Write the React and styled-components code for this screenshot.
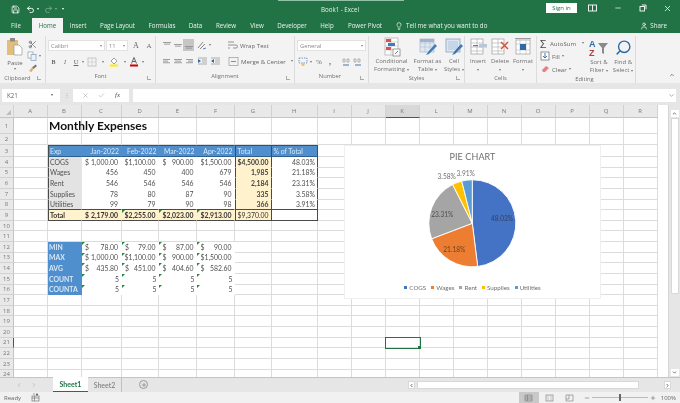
import React from 'react';
import styled, { createGlobalStyle } from 'styled-components';
import { Save, Undo2, Redo2, Lightbulb, Search, Scissors, Check, X, ChevronDown, ChevronUp, Minus, Plus, User, ChevronLeft, ChevronRight } from 'lucide-react';

const GREEN = '#217346';
const UI = '"Open Sans", "Liberation Sans", sans-serif';
const SHEET = 'Lato, "Liberation Sans", sans-serif';

const GlobalStyle = createGlobalStyle`
  html, body { margin: 0; padding: 0; background: #fff; overflow: hidden; }
  * { box-sizing: border-box; }
`;

const Window = styled.div`
  width: 680px;
  height: 403px;
  display: flex;
  flex-direction: column;
  overflow: hidden;
  font-family: ${UI};
  filter: blur(0.4px);
`;

/* title bar */
const TitleBar = styled.div`
  height: 18px;
  background: ${GREEN};
  display: grid;
  grid-template-columns: 278px 126px 1fr;
  color: #fff;
`;
const Qat = styled.div`
  display: flex;
  align-items: center;
  padding-left: 11px;
`;
const QatSlot = styled.span`
  width: ${p => p.$w}px;
  display: flex;
  align-items: center;
  opacity: ${p => p.$dim ? 0.45 : 1};
`;
const DocName = styled.div`
  border-top: 1px solid #8fc2a6;
  font-size: 6.2px;
  display: flex;
  align-items: center;
  justify-content: center;
  padding-right: 2px;
  color: #e6f1eb;
`;
const WinControls = styled.div`
  display: flex;
  align-items: center;
  padding-left: 142px;
`;
const SignIn = styled.div`
  width: 31px;
  height: 10px;
  margin: -2px 3px 0 0;
  background: #fff;
  color: ${GREEN};
  font-size: 6px;
  display: flex;
  align-items: center;
  justify-content: center;
`;
const WinBtn = styled.span`
  width: 25px;
  display: flex;
  justify-content: center;
  margin-top: -2px;
`;

/* tabs */
const TabRow = styled.div`
  height: 15px;
  background: ${GREEN};
  display: flex;
  align-items: stretch;
  color: #eaf3ee;
`;
const Tab = styled.div`
  width: ${p => p.$w}px;
  font-size: 6.2px;
  display: flex;
  align-items: center;
  justify-content: center;
  white-space: nowrap;
  background: ${p => p.$active ? '#f3f3f3' : 'transparent'};
  color: ${p => p.$active ? GREEN : 'inherit'};
`;
const TellMe = styled.div`
  display: flex;
  align-items: center;
  gap: 3px;
  font-size: 6.2px;
  padding-left: 6px;
  flex: 1;
`;
const Share = styled.div`
  display: flex;
  align-items: center;
  gap: 2px;
  font-size: 6.2px;
  padding-right: 13px;
`;

/* ribbon */
const Ribbon = styled.div`
  height: 50px;
  background: #f3f3f3;
  display: flex;
  color: #666;
`;
const Group = styled.div`
  width: ${p => p.$w}px;
  display: flex;
  flex-direction: column;
  margin-top: 3px;
  border-right: ${p => p.$last ? 'none' : '1px solid #dcdcdc'};
  position: relative;
`;
const GroupBody = styled.div`
  flex: 1;
  display: flex;
  padding: ${p => p.$pad || '0'};
  gap: ${p => p.$gap || 0}px;
`;
const GroupLabel = styled.div`
  height: 11px;
  font-size: 5.8px;
  line-height: 9px;
  text-align: ${p => p.$right ? 'right' : 'center'};
  color: #707070;
  padding-right: ${p => p.$shift || 0}px;
`;
const Launcher = styled.span`
  position: absolute;
  right: 4px;
  bottom: 3px;
  width: 4px;
  height: 4px;
  border-left: 1px solid #aaa;
  border-bottom: 1px solid #aaa;
`;
const Caret = styled.span`
  display: inline-block;
  flex: none;
  width: 0;
  height: 0;
  border-left: 1.5px solid transparent;
  border-right: 1.5px solid transparent;
  border-top: 2px solid ${p => p.$c || '#777'};
  margin-left: ${p => p.$ml ?? 2}px;
`;
const Column = styled.div`
  display: flex;
  flex-direction: column;
  align-items: ${p => p.$align || 'flex-start'};
  width: ${p => p.$w ? `${p.$w}px` : 'auto'};
  gap: ${p => p.$gap || 0}px;
  padding: ${p => p.$pad || '0'};
`;
const ToolRow = styled.div`
  display: flex;
  align-items: center;
  height: ${p => p.$h || 12}px;
  gap: ${p => p.$gap || 0}px;
  margin-top: ${p => p.$mt || 0}px;
  font-size: 6.1px;
  white-space: nowrap;
`;
const ToolText = styled.span`
  margin-left: ${p => p.$ml || 2}px;
`;
const PasteLabel = styled.span`
  font-size: 6px;
  line-height: 9px;
  margin-top: 3px;
`;
const Sigma = styled.span`
  font-size: 11px;
  color: #444;
  line-height: 11px;
  width: 8px;
`;
const Combo = styled.div`
  width: ${p => p.$w}px;
  height: 11px;
  background: #fff;
  border: 1px solid #e2e2e2;
  font-size: 5.8px;
  color: #888;
  display: flex;
  align-items: center;
  justify-content: space-between;
  padding: 0 2px;
`;
const Glyph = styled.span`
  width: ${p => p.$w || 11}px;
  text-align: center;
  font-size: ${p => p.$size || 6.5}px;
  font-weight: ${p => p.$bold ? 700 : 400};
  font-style: ${p => p.$italic ? 'italic' : 'normal'};
  text-decoration: ${p => p.$under ? 'underline' : 'none'};
  font-family: "Liberation Serif", serif;
  color: #666;
`;
const IconSlot = styled.span`
  width: ${p => p.$w || 11}px;
  height: ${p => p.$h || 12}px;
  display: flex;
  align-items: center;
  justify-content: center;
  flex: none;
  margin-left: ${p => p.$ml || 0}px;
  background: ${p => p.$on ? '#c6c6c6' : 'transparent'};
`;
const BigBtn = styled.div`
  width: ${p => p.$w}px;
  display: flex;
  flex-direction: column;
  align-items: center;
  font-size: 6px;
  line-height: 8.4px;
  color: #707070;
  white-space: nowrap;
  text-align: center;
`;
const BigIcon = styled.div`
  height: 21px;
  display: flex;
  align-items: center;
  justify-content: center;
`;
const BtnLine = styled.div`
  display: flex;
  align-items: center;
  justify-content: center;
  height: 8.4px;
`;
const FindIcon = styled(Search)`
  transform: scaleX(-1);
`;

/* formula bar */
const FormulaBar = styled.div`
  height: 22px;
  background: #e6e6e6;
  display: flex;
  align-items: center;
  padding: 2px 4px 0 2px;
`;
const NameBox = styled.div`
  width: 58px;
  height: 13px;
  background: #fff;
  font-size: 6.2px;
  color: #666;
  display: flex;
  align-items: center;
  justify-content: space-between;
  padding: 0 7px 0 5px;
`;
const Dots = styled.div`
  width: 13px;
  text-align: center;
  font-size: 6px;
  color: #aaa;
  line-height: 3px;
`;
const FxBox = styled.div`
  width: 56px;
  height: 13px;
  background: #fff;
  display: flex;
  align-items: center;
  justify-content: space-around;
  padding: 0 4px;
  margin-right: 4px;
  color: #aaa;
`;
const Fx = styled.span`
  font-family: "Liberation Serif", serif;
  font-style: italic;
  font-size: 7px;
  color: #555;
`;
const FormulaInput = styled.div`
  flex: 1;
  height: 13px;
  background: #fff;
  display: flex;
  align-items: center;
  justify-content: flex-end;
  padding-right: 1px;
  color: #777;
`;

/* sheet */
const SheetArea = styled.div`
  height: 272px;
  display: flex;
  background: #fff;
`;
const GridViewport = styled.div`
  width: 668px;
  height: 272px;
  overflow: hidden;
  position: relative;
`;
const widths = [14, 33.5, 34, 40, 37.5, 38, 38, 37, 45.5, 34, 34, 34, 34, 34, 34, 34, 34, 34, 34];
const heights = [13, 16, 11, 12, ...Array(21).fill(10.63)];
const Grid = styled.div`
  display: grid;
  grid-template-columns: ${widths.map(w => `${w}px`).join(' ')};
  grid-template-rows: ${heights.map(h => `${h}px`).join(' ')};
  font-family: ${SHEET};
  font-size: 6.85px;
  color: #505050;
`;
const ColHead = styled.div`
  background: ${p => p.$active ? '#d8d8d8' : '#e9e9e9'};
  border-right: 1px solid #d2d2d2;
  border-bottom: 1px solid ${p => p.$active ? GREEN : '#c4c4c4'};
  color: #777;
  font-family: ${UI};
  font-size: 6px;
  display: flex;
  align-items: center;
  justify-content: center;
`;
const Corner = styled(ColHead)`
  align-items: flex-end;
  justify-content: flex-end;
  padding: 0 2px 2px 0;
`;
const CornerMark = styled.span`
  width: 0;
  height: 0;
  border-left: 5px solid transparent;
  border-bottom: 5px solid #bcbcbc;
`;
const RowHead = styled(ColHead)`
  background: #e9e9e9;
  border-right: 1px solid ${p => p.$active ? GREEN : '#c4c4c4'};
  border-bottom: 1px solid #d2d2d2;
`;
const Cell = styled.div`
  position: relative;
  display: flex;
  align-items: center;
  justify-content: ${p => p.$align === 'right' ? 'flex-end' : p.$align === 'split' ? 'space-between' : 'flex-start'};
  padding: 0 ${p => p.$inset ? 2.5 : 1.5}px 0 ${p => p.$align === 'split' ? 3.5 : 1.5}px;
  white-space: nowrap;
  min-width: 0;
  background: ${p => p.$fill || (p.$over ? 'transparent' : '#fff')};
  color: ${p => p.$color || 'inherit'};
  font-weight: ${p => p.$bold ? 700 : 400};
  border-right: 1px solid ${p => p.$br || (p.$fill ? 'transparent' : '#dcdcdc')};
  border-bottom: 1px solid ${p => p.$bb || (p.$fill ? 'transparent' : '#dcdcdc')};
  border-left: ${p => p.$bl ? `1px solid ${p.$bl}` : 'none'};
  border-top: ${p => p.$bt ? `1px solid ${p.$bt}` : 'none'};
  outline: ${p => p.$selected ? `1px solid ${GREEN}` : 'none'};
  z-index: ${p => (p.$selected || p.$over) ? 2 : 'auto'};
  &::before {
    content: '';
    display: ${p => p.$flag ? 'block' : 'none'};
    position: absolute;
    left: 0;
    top: 0;
    border-top: 3px solid #1f8a3d;
    border-right: 3px solid transparent;
  }
  &::after {
    content: '';
    display: ${p => p.$selected ? 'block' : 'none'};
    position: absolute;
    right: -2px;
    bottom: -2px;
    width: 3px;
    height: 3px;
    background: ${GREEN};
  }
`;
const Title = styled.span`
  font-size: 12px;
  font-weight: 700;
  color: #111;
`;

/* chart */
const Chart = styled.div`
  position: absolute;
  left: 345px;
  top: 41px;
  width: 255px;
  height: 152px;
  background: #fff;
  z-index: 3;
  display: flex;
  flex-direction: column;
  align-items: center;
  font-family: ${SHEET};
  box-shadow: 0 0 0 1px #f0f0f0;
`;
const ChartTitle = styled.div`
  font-size: 9px;
  color: #6e6e6e;
  height: 19px;
  padding-top: 5px;
  line-height: 12px;
  letter-spacing: 0.1px;
`;
const Legend = styled.div`
  display: flex;
  gap: 5px;
  font-size: 6.2px;
  color: #707070;
  align-items: center;
  margin-top: -1px;
`;
const LegendItem = styled.span`
  display: flex;
  align-items: center;
  gap: 2px;
`;
const Swatch = styled.i`
  width: 3px;
  height: 3px;
  background: ${p => p.$c};
`;

/* vertical scrollbar */
const VScroll = styled.div`
  width: 12px;
  background: #e6e6e6;
  border-left: 1px solid #d5d5d5;
  display: flex;
  flex-direction: column;
  align-items: center;
  padding: 5px 0 1px 0;
`;
const VThumb = styled.div`
  width: 8px;
  height: 176px;
  margin-top: 1px;
  background: #fff;
  border: 1px solid #d8d8d8;
`;
const ScrollBtn = styled.div`
  width: 8px;
  height: 7px;
  background: #fff;
  display: flex;
  align-items: center;
  justify-content: center;
  color: #555;
  margin-top: ${p => p.$auto ? 'auto' : '0'};
`;

/* sheet tabs */
const TabsBar = styled.div`
  height: 15px;
  background: #e6e6e6;
  border-top: 1px solid #c4c4c4;
  display: flex;
  align-items: stretch;
`;
const NavArrows = styled.div`
  width: 53px;
  display: flex;
  align-items: center;
  justify-content: center;
  gap: 9px;
  color: #b5b5b5;
`;
const SheetTab = styled.div`
  width: ${p => p.$w}px;
  display: flex;
  align-items: center;
  justify-content: center;
  font-family: ${SHEET};
  font-size: 7px;
  margin-top: -1px;
  background: ${p => p.$active ? '#fff' : 'transparent'};
  color: ${p => p.$active ? GREEN : '#777'};
  font-weight: ${p => p.$active ? 700 : 400};
  border-bottom: ${p => p.$active ? `1px solid ${GREEN}` : 'none'};
  border-right: ${p => p.$active ? 'none' : '1px solid #c0c0c0'};
`;
const AddSheet = styled.div`
  width: 9px;
  height: 9px;
  margin: 2px 0 0 17px;
  border: 1px solid #999;
  border-radius: 50%;
  display: flex;
  align-items: center;
  justify-content: center;
  color: #777;
`;
const HScroll = styled.div`
  margin-left: auto;
  width: 263px;
  margin-right: 9px;
  display: flex;
  align-items: center;
  gap: 2px;
`;
const HBtn = styled(ScrollBtn)`
  width: 7px;
  height: 8px;
  border: 1px solid #d8d8d8;
`;
const HThumb = styled.div`
  width: 222px;
  height: 8px;
  background: #fff;
  border: 1px solid #d8d8d8;
`;
const HTrack = styled.div`
  flex: 1;
`;

/* status */
const StatusBar = styled.div`
  height: 11px;
  background: #f1f1f1;
  display: flex;
  align-items: stretch;
  font-size: 6px;
  color: #666;
`;
const Ready = styled.div`
  width: 30px;
  display: flex;
  align-items: center;
  padding-left: 4px;
`;
const StatusRight = styled.div`
  margin-left: auto;
  display: flex;
  align-items: center;
  padding-right: 4px;
`;
const ViewBtn = styled.div`
  width: 20px;
  height: 11px;
  display: flex;
  align-items: center;
  justify-content: center;
  margin-right: ${p => p.$mr || 0}px;
  background: ${p => p.$on ? '#c8c8c8' : 'transparent'};
`;
const ZoomTrack = styled.div`
  width: 56px;
  height: 1px;
  margin: 0 2px;
  background: #bbb;
  display: flex;
  align-items: center;
  justify-content: center;
`;
const ZoomThumb = styled.span`
  width: 2px;
  height: 7px;
  background: #666;
`;
const ZoomPct = styled.span`
  margin-left: 5px;
`;

/* small drawn icons */
const Ico = ({ w = 12, h = 12, vb, children }) => (
  <svg width={w} height={h} viewBox={vb || `0 0 ${w} ${h}`} fill="none">{children}</svg>
);

const AlignLines = ({ lines, y = 3 }) => (
  <Ico w={10} h={10}>
    {lines.map(([x, w], i) => <rect key={i} x={x} y={y + i * 1.7} width={w} height={0.8} fill="#8a8a8a" />)}
  </Ico>
);

const PasteIcon = () => (
  <Ico w={18} h={19}>
    <rect x="1" y="3" width="11" height="15" fill="#e3bd7c" />
    <rect x="4" y="1" width="5" height="3.5" fill="#8a8a8a" />
    <path d="M8 8h5l3 3v7H8z" fill="#fff" stroke="#9a9a9a" strokeWidth="0.7" />
  </Ico>
);
const BrushIcon = () => (
  <Ico w={10} h={10}>
    <path d="M7.5 1.5 9 3 5.5 6 4 4.5z" fill="#777" />
    <path d="M4 4.5 5.5 6 3.5 9 1 8z" fill="#e0b060" />
  </Ico>
);
const CopyIcon = () => (
  <Ico w={10} h={10}>
    <rect x="1" y="1" width="5" height="6" fill="#fff" stroke="#999" strokeWidth="0.7" />
    <rect x="4" y="3.5" width="5" height="6" fill="#eef" stroke="#7a9cc0" strokeWidth="0.7" />
  </Ico>
);
const BorderIcon = () => (
  <Ico w={10} h={10}>
    <rect x="1" y="1" width="8" height="8" stroke="#b5b5b5" strokeWidth="0.7" />
    <path d="M5 1v8M1 5h8" stroke="#c8c8c8" strokeWidth="0.6" />
  </Ico>
);
const FillIcon = () => (
  <Ico w={10} h={11}>
    <path d="M2 5 5 2l3 3-3 3z" fill="#fff" stroke="#777" strokeWidth="0.7" />
    <rect x="1" y="8.5" width="8" height="2" fill="#ffee00" />
  </Ico>
);
const FontColorIcon = () => (
  <Ico w={10} h={11}>
    <path d="M2.5 7.5 5 1.5l2.5 6M3.4 5.5h3.2" stroke="#555" strokeWidth="0.9" />
    <rect x="1" y="8.5" width="8" height="2" fill="#d00000" />
  </Ico>
);
const OrientIcon = () => (
  <Ico w={11} h={11}>
    <path d="M2 8 7 2M4 9l5-5" stroke="#888" strokeWidth="1" />
    <path d="M7 9l3-1" stroke="#5b86b5" strokeWidth="1" />
  </Ico>
);
const WrapIcon = () => (
  <Ico w={11} h={11}>
    <path d="M1 2h6M1 5h8a1.500 1.500 0 0 1 0 3H6M1 8h2" stroke="#888" strokeWidth="0.9" />
  </Ico>
);
const MergeIcon = () => (
  <Ico w={11} h={11}>
    <rect x="1" y="1.500" width="9" height="8" stroke="#999" strokeWidth="0.7" />
    <path d="M3 5.500h5" stroke="#5b86b5" strokeWidth="0.9" />
  </Ico>
);
const IndentIcon = ({ flip }) => (
  <Ico w={11} h={10}>
    <path d="M1 2h9M5 4h5M5 6h5M1 8h9" stroke="#999" strokeWidth="0.8" />
    <path d={flip ? 'M4 3v4L1 5z' : 'M1 3v4l3-2z'} fill="#2c6ba8" />
  </Ico>
);
const CurrencyIcon = () => (
  <Ico w={11} h={11}>
    <rect x="1" y="2" width="8" height="5" stroke="#5b86b5" strokeWidth="0.8" strokeDasharray="1.500 1" />
    <circle cx="5" cy="8.500" r="1.600" fill="#e9c46a" />
  </Ico>
);
const DecimalIcon = ({ flip }) => (
  <Ico w={11} h={10}>
    <path d="M2 2h2v3H2zM6 2h2v3H6z" stroke="#999" strokeWidth="0.7" />
    <path d={flip ? 'M9 8H3' : 'M2 8h6'} stroke="#2c6ba8" strokeWidth="0.9" />
  </Ico>
);
const CondIcon = () => (
  <Ico w={20} h={20}>
    <rect x="3" y="1" width="13" height="17" fill="#fff" stroke="#aaa" strokeWidth="0.7" />
    <path d="M3 5h13M3 9h13M3 13h13M9 1v17" stroke="#bbb" strokeWidth="0.6" />
    <rect x="4" y="2" width="5" height="3" fill="#d9534f" />
    <rect x="6" y="6" width="7" height="3" fill="#3f7cbf" />
    <rect x="4" y="10" width="5" height="3" fill="#d9534f" />
    <rect x="11" y="12" width="7" height="7" fill="#fff" stroke="#777" strokeWidth="0.7" />
    <path d="M13 17l3-3" stroke="#555" strokeWidth="0.8" />
  </Ico>
);
const TableIcon = () => (
  <Ico w={20} h={20}>
    <rect x="2" y="2" width="14" height="13" fill="#dfe7f1" stroke="#a9b5c3" strokeWidth="0.7" />
    <path d="M2 6h14M2 10h14M7 2v13M12 2v13" stroke="#b4bfcc" strokeWidth="0.6" />
    <rect x="2" y="2" width="14" height="3" fill="#9fb4cc" />
    <path d="M17 7 10 15l-2 3 3-1 8-8z" fill="#3f7cbf" />
  </Ico>
);
const StylesIcon = () => (
  <Ico w={20} h={20}>
    <rect x="2" y="2" width="14" height="13" fill="#dbe6f2" stroke="#8aa2bb" strokeWidth="0.8" />
    <rect x="4" y="4" width="10" height="9" fill="#c5d6e8" />
    <path d="M17 7 10 15l-2 3 3-1 8-8z" fill="#3f7cbf" />
    <path d="M11 15l5-6" stroke="#555" strokeWidth="0.7" />
  </Ico>
);
const InsertIcon = () => (
  <Ico w={20} h={20}>
    <rect x="3" y="2" width="12" height="15" fill="#fff" stroke="#9a9a9a" strokeWidth="0.7" />
    <path d="M3 6h12M3 10h12M3 14h12M9 2v15" stroke="#aaa" strokeWidth="0.6" />
    <rect x="11" y="7" width="8" height="3.500" fill="#b9c6d6" />
    <path d="M10 8.700H5" stroke="#2c6ba8" strokeWidth="1" />
  </Ico>
);
const DeleteIcon = () => (
  <Ico w={20} h={20}>
    <rect x="2" y="2" width="12" height="15" fill="#fff" stroke="#9a9a9a" strokeWidth="0.7" />
    <path d="M2 6h12M2 10h12M2 14h12M8 2v15" stroke="#aaa" strokeWidth="0.6" />
    <path d="M11 5l7 7M18 5l-7 7" stroke="#d9543f" strokeWidth="1.500" />
  </Ico>
);
const FormatIcon = () => (
  <Ico w={20} h={20}>
    <rect x="3" y="3" width="14" height="14" fill="#fff" stroke="#9a9a9a" strokeWidth="0.7" />
    <path d="M3 7h14M3 13h14M7 3v14M13 3v14" stroke="#bbb" strokeWidth="0.6" />
    <rect x="7" y="7" width="6" height="6" fill="#2c6ba8" />
    <path d="M2 1.500h16" stroke="#777" strokeWidth="0.7" />
  </Ico>
);
const SortIcon = () => (
  <Ico w={24} h={20}>
    <text x="2" y="9" fontSize="9" fontWeight="700" fill="#2c6ba8" fontFamily="Liberation Sans">A</text>
    <text x="2" y="18" fontSize="9" fontWeight="700" fill="#b0413e" fontFamily="Liberation Sans">Z</text>
    <path d="M11 5h10l-4 5v6l-2-1v-5z" fill="#8a8a8a" />
  </Ico>
);
const FillDownIcon = () => (
  <Ico w={10} h={10}>
    <rect x="1" y="1" width="8" height="8" fill="#fff" stroke="#666" strokeWidth="0.7" />
    <path d="M5 2v5M3 5l2 2 2-2" stroke="#2c6ba8" strokeWidth="0.9" />
  </Ico>
);
const EraserIcon = () => (
  <Ico w={10} h={10}>
    <path d="M6 2 9 4 5 8H3L2 6z" fill="#e77f86" />
  </Ico>
);
const BookIcon = () => (
  <Ico w={9} h={8}>
    <rect x="0.500" y="1" width="8" height="6" stroke="#fff" strokeWidth="0.9" />
    <path d="M4.500 1v6" stroke="#fff" strokeWidth="0.9" />
  </Ico>
);
const RestoreIcon = () => (
  <Ico w={8} h={8}>
    <rect x="1" y="2.500" width="4.500" height="4.500" stroke="#fff" strokeWidth="0.9" />
    <path d="M2.800 1h4.200v4.200" stroke="#fff" strokeWidth="0.9" />
  </Ico>
);
const MacroIcon = () => (
  <Ico w={9} h={9}>
    <rect x="1" y="3" width="7" height="5" stroke="#777" strokeWidth="0.7" />
    <path d="M1 5h7M3.500 3v5M2 1h2" stroke="#777" strokeWidth="0.7" />
    <circle cx="6" cy="1.500" r="1" fill="#555" />
  </Ico>
);
const NormalView = () => (
  <Ico w={9} h={8}>
    <path d="M1 1h7v6H1zM1 3h7M1 5h7M3.500 1v6" stroke="#777" strokeWidth="0.6" />
  </Ico>
);
const LayoutView = () => (
  <Ico w={9} h={8}>
    <rect x="1" y="1" width="7" height="6" stroke="#888" strokeWidth="0.7" />
    <path d="M3 1v6M6 1v6" stroke="#aaa" strokeWidth="0.6" />
  </Ico>
);
const BreakView = () => (
  <Ico w={9} h={8}>
    <path d="M1 1h7v6H1zM1 5h3V1" stroke="#888" strokeWidth="0.7" />
  </Ico>
);

/* sheet data */
const BLUE = '#4f8fcd';
const BLUE_TEXT = '#d8e7f5';
const CREAM = '#fff2cc';
const GREY = '#e4e3e3';
const COLS = 'ABCDEFGHIJKLMNOPQR'.split('');

const money = (cur, text) => ({ cur, text, $align: cur ? 'split' : 'right', $inset: true });
const cells = {};
const put = (ref, props) => { cells[ref] = { ...cells[ref], ...props }; };

put('B1', { text: 'Monthly Expenses', title: true, $over: true });
['Exp', 'Jan-2022', 'Feb-2022', 'Mar-2022', 'Apr-2022', 'Total', '% of Total'].forEach((t, i) => {
  const c = 'BCDEFGH'[i];
  put(`${c}3`, { text: t, $fill: BLUE, $color: BLUE_TEXT, $bt: '#2f5f8f', $bb: '#2f5f8f', $align: i >= 1 && i <= 4 ? 'right' : 'left' });
});

const table = [
  ['COGS', ['$', '1,000.00'], ['', '$1,100.00'], ['$', '900.00'], ['', '$1,500.00'], '$4,500.00', '48.03%'],
  ['Wages', '456', '450', '400', '679', '1,985', '21.18%'],
  ['Rent', '546', '546', '546', '546', '2,184', '23.31%'],
  ['Supplies', '78', '80', '87', '90', '335', '3.58%'],
  ['Utilities', '99', '79', '90', '98', '366', '3.91%'],
];
table.forEach((row, i) => {
  const r = 4 + i;
  put(`B${r}`, { text: row[0], $fill: GREY });
  'CDEF'.split('').forEach((c, j) => {
    const v = row[j + 1];
    put(`${c}${r}`, Array.isArray(v) ? { ...money(v[0], v[1]), $fill: '#fff' } : { text: v, $align: 'right', $inset: true, $fill: '#fff' });
  });
  put(`G${r}`, { text: row[5], $align: 'right', $inset: true, $fill: CREAM, $bold: true, $color: '#444' });
  put(`H${r}`, { text: row[6], $align: 'right', $fill: '#fff' });
});

const totals = [['C', '$', '2,179.00'], ['D', '', '$2,255.00'], ['E', '', '$2,023.00'], ['F', '', '$2,913.00']];
put('B9', { text: 'Total', $fill: CREAM, $bold: true, $color: '#333' });
totals.forEach(([c, cur, text]) => put(`${c}9`, { ...money(cur, text), $fill: CREAM, $bold: true, $color: '#333', $flag: c !== 'C' }));
put('G9', { text: '$9,370.00', $fill: CREAM, $align: 'right', $inset: true, $color: '#333' });
put('H9', { text: '', $fill: '#fff' });

const DARK = '#4a4a4a';
[3, 4, 5, 6, 7, 8, 9].forEach(r => {
  put(`B${r}`, { $bl: DARK });
  put(`G${r}`, { $bl: DARK, $br: DARK });
  put(`H${r}`, { $br: DARK });
});
'BCDEFGH'.split('').forEach(c => {
  put(`${c}3`, { $bt: DARK });
  put(`${c}8`, { $bb: DARK });
  put(`${c}9`, { $bb: DARK });
});

const stats = [
  ['MIN', ['$', '78.00'], ['$', '79.00'], ['$', '87.00'], ['$', '90.00']],
  ['MAX', ['$', '1,000.00'], ['', '$1,100.00'], ['$', '900.00'], ['', '$1,500.00']],
  ['AVG', ['$', '435.80'], ['$', '451.00'], ['$', '404.60'], ['$', '582.60']],
  ['COUNT', '5', '5', '5', '5'],
  ['COUNTA', '5', '5', '5', '5'],
];
stats.forEach((row, i) => {
  const r = 12 + i;
  put(`B${r}`, { text: row[0], $fill: BLUE, $color: BLUE_TEXT, $bold: true });
  'CDEF'.split('').forEach((c, j) => {
    const v = row[j + 1];
    const base = Array.isArray(v) ? money(v[0], v[1]) : { text: v, $align: 'right' };
    put(`${c}${r}`, { ...base, $fill: '#fff', $flag: true });
  });
});
put('K21', { $selected: true });

/* pie */
const slices = [
  { name: 'COGS', v: 48.03, c: '#4472c4' },
  { name: 'Wages', v: 21.18, c: '#ed7d31' },
  { name: 'Rent', v: 23.31, c: '#a5a5a5' },
  { name: 'Supplies', v: 3.58, c: '#ffc000' },
  { name: 'Utilities', v: 3.91, c: '#5b9bd5' },
];
const CX = 472.3;
const CY = 223.3;
const R = 43.5;
const point = pct => {
  const a = (pct / 100) * 2 * Math.PI;
  return [CX + R * Math.sin(a), CY - R * Math.cos(a)];
};
let acc = 0;
const wedges = slices.map(s => {
  const [x1, y1] = point(acc);
  acc += s.v;
  const [x2, y2] = point(acc);
  return { ...s, d: `M${CX} ${CY}L${x1} ${y1}A${R} ${R} 0 ${s.v > 50 ? 1 : 0} 1 ${x2} ${y2}Z` };
});
const pieLabels = [
  ['48.03%', 502, 220.5, '#33415c'],
  ['21.18%', 454.3, 251.5, '#6b4522'],
  ['23.31%', 442.3, 216.5, '#505050'],
  ['3.58%', 446.7, 178.5, '#707070'],
  ['3.91%', 465.7, 175.5, '#707070'],
];

const tabs = [
  ['File', 32], ['Home', 31, true], ['Insert', 30], ['Page Layout', 49], ['Formulas', 40], ['Data', 27],
  ['Review', 34], ['View', 28], ['Developer', 42], ['Help', 28], ['Power Pivot', 48],
];

const renderCell = (ref) => {
  const { text, cur, title, ...style } = cells[ref] || {};
  return (
    <Cell key={ref} {...style}>
      {title ? <Title>{text}</Title> : cur ? <><span>{cur}</span><span>{text}</span></> : text}
    </Cell>
  );
};

const App = () => (
  <>
    <GlobalStyle />
    <Window>
      <TitleBar>
        <Qat>
          <QatSlot $w={15}><Save size={9} color="#fff" strokeWidth={2} /></QatSlot>
          <QatSlot $w={18}><Undo2 size={9} color="#fff" strokeWidth={2.4} /><Caret $c="#fff" /></QatSlot>
          <QatSlot $w={17} $dim><Redo2 size={9} color="#fff" /><Caret $c="#fff" /></QatSlot>
          <QatSlot $w={8}><Caret $c="#fff" $ml={1} /></QatSlot>
        </Qat>
        <DocName>Book1 - Excel</DocName>
        <WinControls>
          <SignIn>Sign in</SignIn>
          <WinBtn><BookIcon /></WinBtn>
          <WinBtn><Minus size={8} color="#fff" /></WinBtn>
          <WinBtn><RestoreIcon /></WinBtn>
          <WinBtn><X size={9} color="#fff" /></WinBtn>
        </WinControls>
      </TitleBar>

      <TabRow>
        {tabs.map(([t, w, active]) => <Tab key={t} $w={w} $active={active}>{t}</Tab>)}
        <TellMe><Lightbulb size={8} color="#fff" />Tell me what you want to do</TellMe>
        <Share><User size={8} color="#fff" />Share</Share>
      </TabRow>

      <Ribbon>
        <Group $w={46}>
          <GroupBody $pad="1px 0 0 4px">
            <Column $w={22} $align="center">
              <PasteIcon />
              <PasteLabel>Paste</PasteLabel>
              <Caret $ml={0} />
            </Column>
            <Column $pad="1px 0 0 1px">
              <IconSlot><Scissors size={9} color="#666" /></IconSlot>
              <ToolRow><CopyIcon /><Caret /></ToolRow>
              <IconSlot><BrushIcon /></IconSlot>
            </Column>
          </GroupBody>
          <GroupLabel $shift={10}>Clipboard</GroupLabel>
          <Launcher />
        </Group>

        <Group $w={110}>
          <GroupBody $pad="4px 0 0 2px">
            <Column>
              <ToolRow $gap={1} $h={11}>
                <Combo $w={57}>Calibri<Caret $c="#888" /></Combo>
                <Combo $w={22}>11<Caret $c="#888" /></Combo>
                <Glyph $w={14} $size={8}>A</Glyph>
                <Glyph $w={10} $size={7}>A</Glyph>
              </ToolRow>
              <ToolRow $mt={5} $h={11}>
                <Glyph $w={11} $bold $size={6}>B</Glyph>
                <Glyph $w={12} $italic $size={6}>I</Glyph>
                <Glyph $w={10} $under $size={6.5}>U</Glyph>
                <Caret $ml={1} />
                <IconSlot $w={16}><BorderIcon /></IconSlot>
                <Caret $ml={2} />
                <IconSlot $w={20}><FillIcon /></IconSlot>
                <Caret $ml={0} />
                <IconSlot $w={15}><FontColorIcon /></IconSlot>
                <Caret $ml={1} />
              </ToolRow>
            </Column>
          </GroupBody>
          <GroupLabel>Font</GroupLabel>
          <Launcher />
        </Group>

        <Group $w={139}>
          <GroupBody $pad="3px 0 0 5px">
            <Column>
              <ToolRow>
                <IconSlot><AlignLines lines={[[1, 8], [2, 6]]} y={2} /></IconSlot>
                <IconSlot><AlignLines lines={[[1, 8], [2, 6]]} y={4} /></IconSlot>
                <IconSlot $on><AlignLines lines={[[1, 8], [2, 6]]} y={6} /></IconSlot>
                <IconSlot $w={15}><OrientIcon /></IconSlot>
                <Caret $ml={0} />
                <IconSlot $w={16} />
                <IconSlot><WrapIcon /></IconSlot>
                <ToolText>Wrap Text</ToolText>
              </ToolRow>
              <ToolRow $mt={4}>
                <IconSlot><AlignLines lines={[[1, 7], [1, 5], [1, 7]]} /></IconSlot>
                <IconSlot><AlignLines lines={[[1, 8], [2, 6], [1, 8]]} /></IconSlot>
                <IconSlot><AlignLines lines={[[2, 7], [4, 5], [2, 7]]} /></IconSlot>
                <IconSlot $w={16}><IndentIcon /></IconSlot>
                <IconSlot $w={11}><IndentIcon flip /></IconSlot>
                <IconSlot $w={7} />
                <IconSlot><MergeIcon /></IconSlot>
                <ToolText>Merge &amp; Center</ToolText>
                <Caret $ml={5} />
              </ToolRow>
            </Column>
          </GroupBody>
          <GroupLabel>Alignment</GroupLabel>
          <Launcher />
        </Group>

        <Group $w={74}>
          <GroupBody $pad="4px 0 0 2px">
            <Column>
              <Combo $w={69}>General<Caret $c="#888" /></Combo>
              <ToolRow $mt={5} $h={11}>
                <IconSlot $w={12}><CurrencyIcon /></IconSlot>
                <Caret $ml={1} />
                <Glyph $w={14} $size={7}>%</Glyph>
                <Glyph $w={8} $size={8} $bold>,</Glyph>
                <IconSlot $w={11} $ml={7}><DecimalIcon /></IconSlot>
                <IconSlot $w={11}><DecimalIcon flip /></IconSlot>
              </ToolRow>
            </Column>
          </GroupBody>
          <GroupLabel $shift={3}>Number</GroupLabel>
          <Launcher />
        </Group>

        <Group $w={96}>
          <GroupBody $pad="0 0 0 3px">
            <BigBtn $w={39}>
              <BigIcon><CondIcon /></BigIcon>
              <BtnLine>Conditional</BtnLine>
              <BtnLine>Formatting<Caret /></BtnLine>
            </BigBtn>
            <BigBtn $w={33}>
              <BigIcon><TableIcon /></BigIcon>
              <BtnLine>Format as</BtnLine>
              <BtnLine>Table<Caret /></BtnLine>
            </BigBtn>
            <BigBtn $w={20}>
              <BigIcon><StylesIcon /></BigIcon>
              <BtnLine>Cell</BtnLine>
              <BtnLine>Styles<Caret /></BtnLine>
            </BigBtn>
          </GroupBody>
          <GroupLabel>Styles</GroupLabel>
          <Launcher />
        </Group>

        <Group $w={72}>
          <GroupBody $pad="0 0 0 2px">
            <BigBtn $w={22}>
              <BigIcon><InsertIcon /></BigIcon>
              <BtnLine>Insert</BtnLine>
              <BtnLine><Caret $ml={0} /></BtnLine>
            </BigBtn>
            <BigBtn $w={22}>
              <BigIcon><DeleteIcon /></BigIcon>
              <BtnLine>Delete</BtnLine>
              <BtnLine><Caret $ml={0} /></BtnLine>
            </BigBtn>
            <BigBtn $w={24}>
              <BigIcon><FormatIcon /></BigIcon>
              <BtnLine>Format</BtnLine>
              <BtnLine><Caret $ml={0} /></BtnLine>
            </BigBtn>
          </GroupBody>
          <GroupLabel>Cells</GroupLabel>
        </Group>

        <Group $w={99}>
          <GroupBody $pad="1px 0 0 3px">
            <Column $w={47}>
              <ToolRow $gap={2}><Sigma>Σ</Sigma>AutoSum<Caret $ml={4} /></ToolRow>
              <ToolRow $gap={2} $mt={1}><FillDownIcon />Fill<Caret $ml={0} /></ToolRow>
              <ToolRow $gap={2} $mt={1}><EraserIcon />Clear<Caret $ml={0} /></ToolRow>
            </Column>
            <BigBtn $w={25}>
              <BigIcon><SortIcon /></BigIcon>
              <BtnLine>Sort &amp;</BtnLine>
              <BtnLine>Filter<Caret /></BtnLine>
            </BigBtn>
            <BigBtn $w={24}>
              <BigIcon><FindIcon size={17} color="#2c6ba8" strokeWidth={2} /></BigIcon>
              <BtnLine>Find &amp;</BtnLine>
              <BtnLine>Select<Caret /></BtnLine>
            </BigBtn>
          </GroupBody>
          <GroupLabel $shift={3}>Editing</GroupLabel>
        </Group>

        <Group $w={43} $last>
          <GroupBody />
          <GroupLabel $right $shift={4}><ChevronUp size={6} color="#666" strokeWidth={3} /></GroupLabel>
        </Group>
      </Ribbon>

      <FormulaBar>
        <NameBox>K21<Caret $c="#555" /></NameBox>
        <Dots>⋮</Dots>
        <FxBox><X size={7} /><Check size={7} /><Fx>fx</Fx></FxBox>
        <FormulaInput><ChevronDown size={7} /></FormulaInput>
      </FormulaBar>

      <SheetArea>
        <GridViewport>
          <Grid>
            <Corner><CornerMark /></Corner>
            {COLS.map(c => <ColHead key={c} $active={c === 'K'}>{c}</ColHead>)}
            {Array.from({ length: 24 }, (_, i) => i + 1).map(r => (
              <React.Fragment key={r}>
                <RowHead $active={r === 21}>{r}</RowHead>
                {COLS.map(c => renderCell(`${c}${r}`))}
              </React.Fragment>
            ))}
          </Grid>
          <Chart>
            <ChartTitle>PIE CHART</ChartTitle>
            <svg width="255" height="120" viewBox="345 165 255 120">
              {wedges.map(w => <path key={w.name} d={w.d} fill={w.c} stroke="#fff" strokeWidth="0.9" />)}
              {pieLabels.map(([t, x, y, c]) => (
                <text key={t} x={x} y={y} fontSize="6.6" fill={c} textAnchor="middle" fontFamily="Lato, sans-serif">{t}</text>
              ))}
            </svg>
            <Legend>
              {slices.map(s => <LegendItem key={s.name}><Swatch $c={s.c} />{s.name}</LegendItem>)}
            </Legend>
          </Chart>
        </GridViewport>
        <VScroll>
          <ScrollBtn><ChevronUp size={5} strokeWidth={4} /></ScrollBtn>
          <VThumb />
          <ScrollBtn $auto><ChevronDown size={5} strokeWidth={4} /></ScrollBtn>
        </VScroll>
      </SheetArea>

      <TabsBar>
        <NavArrows><ChevronLeft size={6} strokeWidth={3} /><ChevronRight size={6} strokeWidth={3} /></NavArrows>
        <SheetTab $w={35} $active>Sheet1</SheetTab>
        <SheetTab $w={34}>Sheet2</SheetTab>
        <AddSheet><Plus size={6} strokeWidth={2.5} /></AddSheet>
        <HScroll>
          <HBtn><ChevronLeft size={5} strokeWidth={4} /></HBtn>
          <HThumb />
          <HTrack />
          <HBtn><ChevronRight size={5} strokeWidth={4} /></HBtn>
        </HScroll>
      </TabsBar>

      <StatusBar>
        <Ready>Ready</Ready>
        <IconSlot $h={11}><MacroIcon /></IconSlot>
        <StatusRight>
          <ViewBtn $on $mr={1}><NormalView /></ViewBtn>
          <ViewBtn><LayoutView /></ViewBtn>
          <ViewBtn $mr={4}><BreakView /></ViewBtn>
          <Minus size={6} color="#555" />
          <ZoomTrack><ZoomThumb /></ZoomTrack>
          <Plus size={6} color="#555" />
          <ZoomPct>100%</ZoomPct>
        </StatusRight>
      </StatusBar>
    </Window>
  </>
);

export default App;
